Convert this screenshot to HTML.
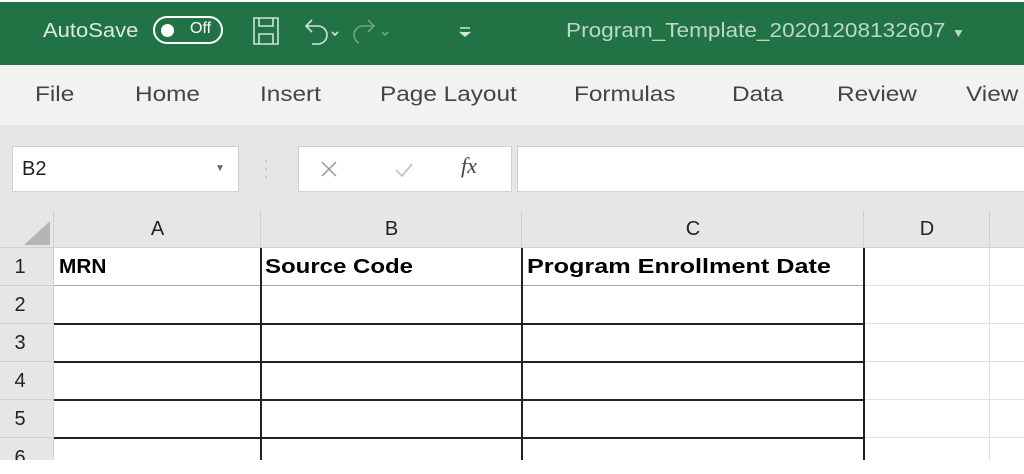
<!DOCTYPE html>
<html><head><style>
body{margin:0;width:1024px;height:474px;overflow:hidden;background:#fff;font-family:"Liberation Sans",sans-serif;position:relative}
.a{position:absolute}
.g{background:#217346;left:0;top:2px;width:1024px;height:63px}
.t{color:#d9ece0;font-size:20px}
.rib{background:#f3f2f1;left:0;top:65px;width:1024px;height:60px;box-shadow:0 2px 3px rgba(0,0,0,.12)}
.tab{top:83px;font-size:21px;color:#444;transform:scaleX(1.16);transform-origin:0 0}
.fb{background:#e6e6e6;left:0;top:125px;width:1024px;height:86px}
.box{background:#fff;border:1px solid #d0d0d0}
.h{background:#e6e6e6;color:#222;font-size:20px;text-align:center}
.hl{background:#d0d0d0}
.k{background:#222}
.lt{background:#e0e0e0}
.b{font-weight:bold;font-size:20px;color:#000;transform-origin:0 0;white-space:nowrap}
</style></head><body>
<div class="a g"></div>
<div class="a t" style="left:43px;top:20px;transform:scaleX(1.1);transform-origin:0 0">AutoSave</div>
<div class="a" style="left:153px;top:16px;width:70px;height:28px;border:2px solid #fff;border-radius:16px;box-sizing:border-box"></div>
<div class="a" style="left:161px;top:24px;width:13px;height:13px;border-radius:50%;background:#fff"></div>
<div class="a" style="left:190px;top:20px;color:#fff;font-size:16px">Off</div>
<svg class="a" style="left:250px;top:14px" width="240" height="36" viewBox="0 0 240 36" fill="none" stroke="#cfe5d6" stroke-width="1.6">
<path d="M4 4h24v26H4z M9 4v8h14V4 M9 30V20h14v10"/>
<path d="M62 6l-6 6 6 6 M56 12h12a9 9 0 0 1 0 18h-6"/>
<path d="M82 18l3 3 3-3"/>
<path stroke="#6da583" d="M118 6l6 6-6 6 M124 12h-12a9 9 0 0 0-3 17"/>
<path stroke="#6da583" d="M132 18l3 3 3-3"/>
<path d="M210 14h10 M210 18l5 4 5-4" fill="#cfe5d6"/>
</svg>
<div class="a t" style="left:566px;top:20px;color:#bcd9c6;transform:scaleX(1.13);transform-origin:0 0;white-space:nowrap">Program_Template_20201208132607 <span style="font-size:12px">▼</span></div>
<div class="a rib"></div>
<div class="a tab" style="left:35px">File</div>
<div class="a tab" style="left:135px">Home</div>
<div class="a tab" style="left:260px">Insert</div>
<div class="a tab" style="left:380px">Page Layout</div>
<div class="a tab" style="left:574px">Formulas</div>
<div class="a tab" style="left:732px">Data</div>
<div class="a tab" style="left:837px">Review</div>
<div class="a tab" style="left:966px">View</div>
<div class="a fb"></div>
<div class="a box" style="left:12px;top:146px;width:225px;height:44px"></div>
<div class="a" style="left:22px;top:158px;font-size:20px;color:#222">B2</div>
<div class="a" style="left:215px;top:163px;font-size:10px;color:#666">▼</div>
<div class="a" style="left:264px;top:156px;color:#aaa;font-size:14px;line-height:8px">·<br>·<br>·</div>
<div class="a box" style="left:298px;top:146px;width:212px;height:44px"></div>
<svg class="a" style="left:318px;top:158px" width="180" height="24" fill="none" stroke="#999" stroke-width="1.5"><path d="M4 4l14 14M18 4L4 18"/><path stroke="#bbb" d="M78 12l6 6 10-12"/></svg>
<div class="a" style="left:461px;top:153px;font-family:'Liberation Serif',serif;font-style:italic;font-size:22px;color:#444">fx</div>
<div class="a box" style="left:517px;top:146px;width:520px;height:44px"></div>
<div class="a h" style="left:0;top:211px;width:1024px;height:37px"></div>
<div class="a h" style="left:0;top:248px;width:53px;height:212px;overflow:hidden"></div>
<svg class="a" style="left:22px;top:219px" width="30" height="28"><path d="M28 2V26H2z" fill="#b5b5b5"/></svg>
<div class="a hl" style="left:53px;top:211px;width:1px;height:249px"></div>
<div class="a hl" style="left:0;top:247px;width:1024px;height:1px"></div>
<div class="a h" style="left:54px;top:218px;width:207px">A</div>
<div class="a h" style="left:261px;top:218px;width:261px">B</div>
<div class="a h" style="left:522px;top:218px;width:342px">C</div>
<div class="a h" style="left:864px;top:218px;width:126px">D</div>
<div class="a hl" style="left:260px;top:211px;width:1px;height:37px"></div>
<div class="a hl" style="left:521px;top:211px;width:1px;height:37px"></div>
<div class="a hl" style="left:863px;top:211px;width:1px;height:37px"></div>
<div class="a hl" style="left:989px;top:211px;width:1px;height:37px"></div>
<div class="a h" style="left:0;top:256px;width:40px">1</div>
<div class="a h" style="left:0;top:294px;width:40px">2</div>
<div class="a h" style="left:0;top:332px;width:40px">3</div>
<div class="a h" style="left:0;top:370px;width:40px">4</div>
<div class="a h" style="left:0;top:408px;width:40px">5</div>
<div class="a h" style="left:0;top:447px;width:40px;height:13px;overflow:hidden;line-height:23px">6</div>
<div class="a hl" style="left:0;top:285px;width:54px;height:1px"></div>
<div class="a hl" style="left:0;top:323px;width:54px;height:1px"></div>
<div class="a hl" style="left:0;top:361px;width:54px;height:1px"></div>
<div class="a hl" style="left:0;top:399px;width:54px;height:1px"></div>
<div class="a hl" style="left:0;top:437px;width:54px;height:1px"></div>
<div class="a" style="left:54px;top:285px;width:810px;height:1px;background:#aaa"></div>
<div class="a k" style="left:54px;top:323px;width:810px;height:2px"></div>
<div class="a k" style="left:54px;top:361px;width:810px;height:2px"></div>
<div class="a k" style="left:54px;top:399px;width:810px;height:2px"></div>
<div class="a k" style="left:54px;top:437px;width:810px;height:2px"></div>
<div class="a lt" style="left:864px;top:285px;width:160px;height:1px"></div>
<div class="a lt" style="left:864px;top:323px;width:160px;height:1px"></div>
<div class="a lt" style="left:864px;top:361px;width:160px;height:1px"></div>
<div class="a lt" style="left:864px;top:399px;width:160px;height:1px"></div>
<div class="a lt" style="left:864px;top:437px;width:160px;height:1px"></div>
<div class="a k" style="left:260px;top:248px;width:2px;height:212px"></div>
<div class="a k" style="left:521px;top:248px;width:2px;height:212px"></div>
<div class="a k" style="left:863px;top:248px;width:2px;height:212px"></div>
<div class="a lt" style="left:989px;top:248px;width:1px;height:212px"></div>
<div class="a b" style="left:59px;top:256px;transform:scaleX(1.04)">MRN</div>
<div class="a b" style="left:265px;top:256px;transform:scaleX(1.2)">Source Code</div>
<div class="a b" style="left:527px;top:256px;transform:scaleX(1.26)">Program Enrollment Date</div>
</body></html>
